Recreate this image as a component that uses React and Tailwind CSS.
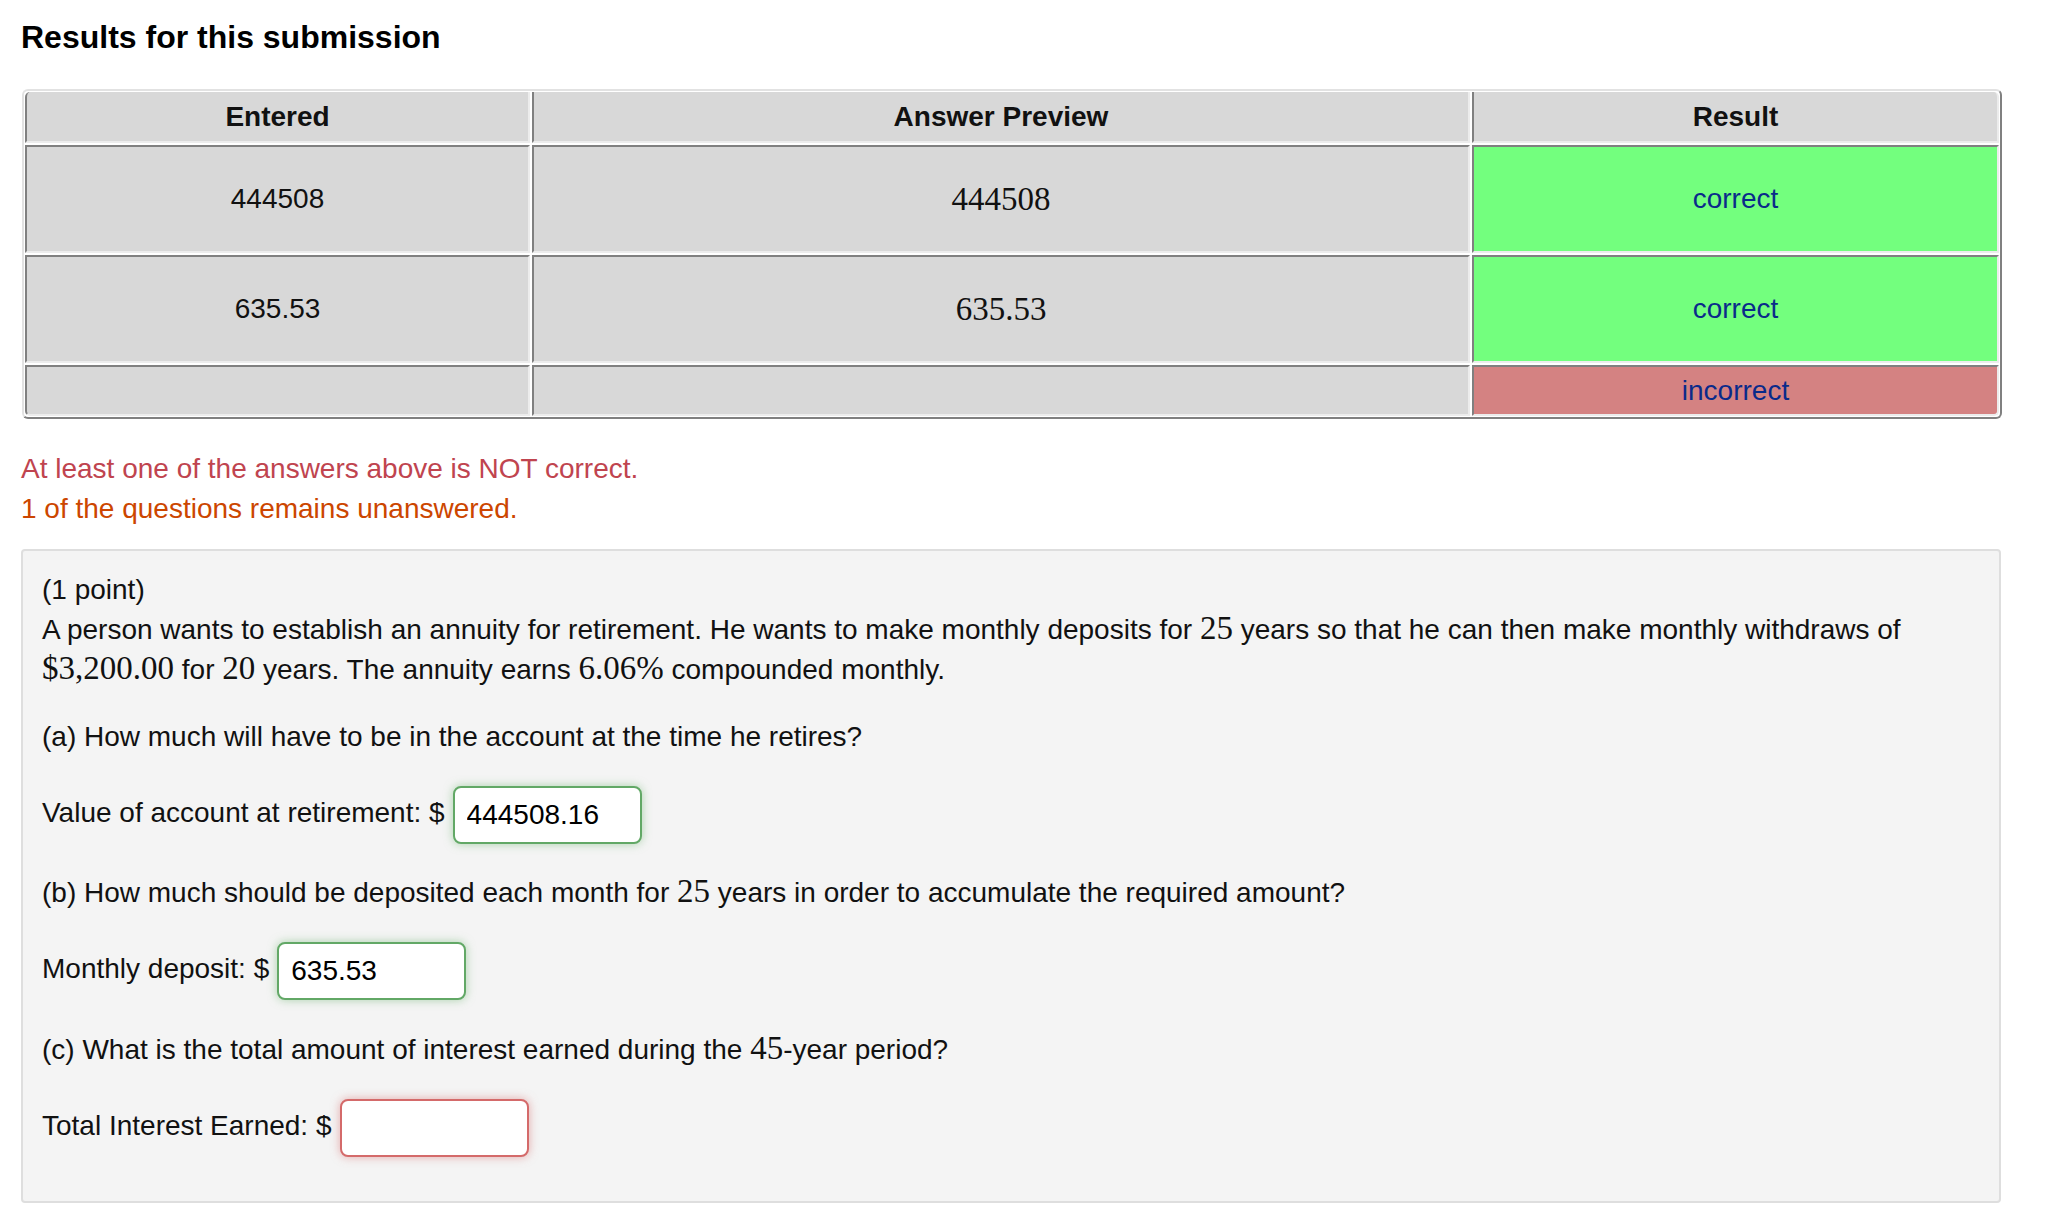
import React from "react";

const Math = ({ children }) => (
  <span className="font-['Liberation_Serif','Times_New_Roman',serif] text-[33px] leading-none">
    {children}
  </span>
);

const headCell =
  "flex items-center justify-center h-[51px] bg-[#d8d8d8] border-l-2 border-r-2 border-b-2 border-l-[#808080] border-r-[#ececec] border-b-[#ececec] font-bold";

const bodyCell =
  "flex items-center justify-center border-2 border-t-[#808080] border-l-[#808080] border-r-[#ececec] border-b-[#ececec]";

const AnswerInput = ({ value, ok }) => (
  <input
    readOnly
    value={value}
    className={`w-[189px] h-[58px] bg-white rounded-[8px] border-2 pl-[12px] text-[28px] text-black outline-none font-['Liberation_Sans',Arial,sans-serif] ${
      ok
        ? "border-[#62a866] shadow-[0_0_10px_rgba(110,180,112,0.55)]"
        : "border-[#d46a6a] shadow-[0_0_10px_rgba(215,110,110,0.55)]"
    }`}
  />
);

const AnswerRow = ({ label, value, ok, mt }) => (
  <div className={`flex items-center gap-[8px] h-[58px] ${mt}`}>
    <span className="mb-[5px]">{label}</span>
    <AnswerInput value={value} ok={ok} />
  </div>
);

export default function App() {
  return (
    <div className="min-h-screen bg-white pl-[21px] text-[28px] leading-[40px] text-[#111] font-['Liberation_Sans',Arial,sans-serif]">
      <h2 className="pt-[17px] text-[32px] leading-[40px] font-bold text-black">Results for this submission</h2>

      {/* results table */}
      <div className="mt-[32px] ml-[1px] w-[1980px] p-[1px] rounded-[6px] border-2 border-t-[#e2e2e2] border-l-[#e2e2e2] border-r-[#808080] border-b-[#808080]">
        <div className="grid grid-cols-[505px_938px_527px] gap-[2px]">
          <div className={`${headCell} rounded-tl-[5px]`}>Entered</div>
          <div className={headCell}>Answer Preview</div>
          <div className={`${headCell} rounded-tr-[5px]`}>Result</div>

          <div className={`${bodyCell} h-[108px] bg-[#d8d8d8]`}>444508</div>
          <div className={`${bodyCell} h-[108px] bg-[#d8d8d8]`}>
            <Math>444508</Math>
          </div>
          <div className={`${bodyCell} h-[108px] bg-[#73ff7e] text-[#0a2a8a]`}>correct</div>

          <div className={`${bodyCell} h-[108px] bg-[#d8d8d8]`}>635.53</div>
          <div className={`${bodyCell} h-[108px] bg-[#d8d8d8]`}>
            <Math>635.53</Math>
          </div>
          <div className={`${bodyCell} h-[108px] bg-[#73ff7e] text-[#0a2a8a]`}>correct</div>

          <div className={`${bodyCell} h-[51px] bg-[#d8d8d8] rounded-bl-[5px]`}></div>
          <div className={`${bodyCell} h-[51px] bg-[#d8d8d8]`}></div>
          <div className={`${bodyCell} h-[51px] bg-[#d48282] text-[#0a2a8a] rounded-br-[5px]`}>incorrect</div>
        </div>
      </div>

      <div className="mt-[30px]">
        <div className="text-[#c0444f]">At least one of the answers above is NOT correct.</div>
        <div className="text-[#cc4600]">1 of the questions remains unanswered.</div>
      </div>

      {/* problem */}
      <div className="mt-[20px] w-[1980px] bg-[#f4f4f4] border-2 border-[#dedede] rounded-[4px] pl-[19px] pr-[19px] pt-[19px] pb-[44px]">
        <div>
          <div>(1 point)</div>
          <div>
            A person wants to establish an annuity for retirement. He wants to make monthly deposits for <Math>25</Math>{" "}
            years so that he can then make monthly withdraws of <Math>$3,200.00</Math> for <Math>20</Math> years. The
            annuity earns <Math>6.06%</Math> compounded monthly.
          </div>
        </div>

        <div className="mt-[27px]">(a) How much will have to be in the account at the time he retires?</div>
        <AnswerRow label="Value of account at retirement: $" value="444508.16" ok mt="mt-[29px]" />

        <div className="mt-[29px]">
          (b) How much should be deposited each month for <Math>25</Math> years in order to accumulate the required
          amount?
        </div>
        <AnswerRow label="Monthly deposit: $" value="635.53" ok mt="mt-[29px]" />

        <div className="mt-[30px]">
          (c) What is the total amount of interest earned during the <Math>45</Math>-year period?
        </div>
        <AnswerRow label="Total Interest Earned: $" value="" ok={false} mt="mt-[29px]" />
      </div>
    </div>
  );
}
